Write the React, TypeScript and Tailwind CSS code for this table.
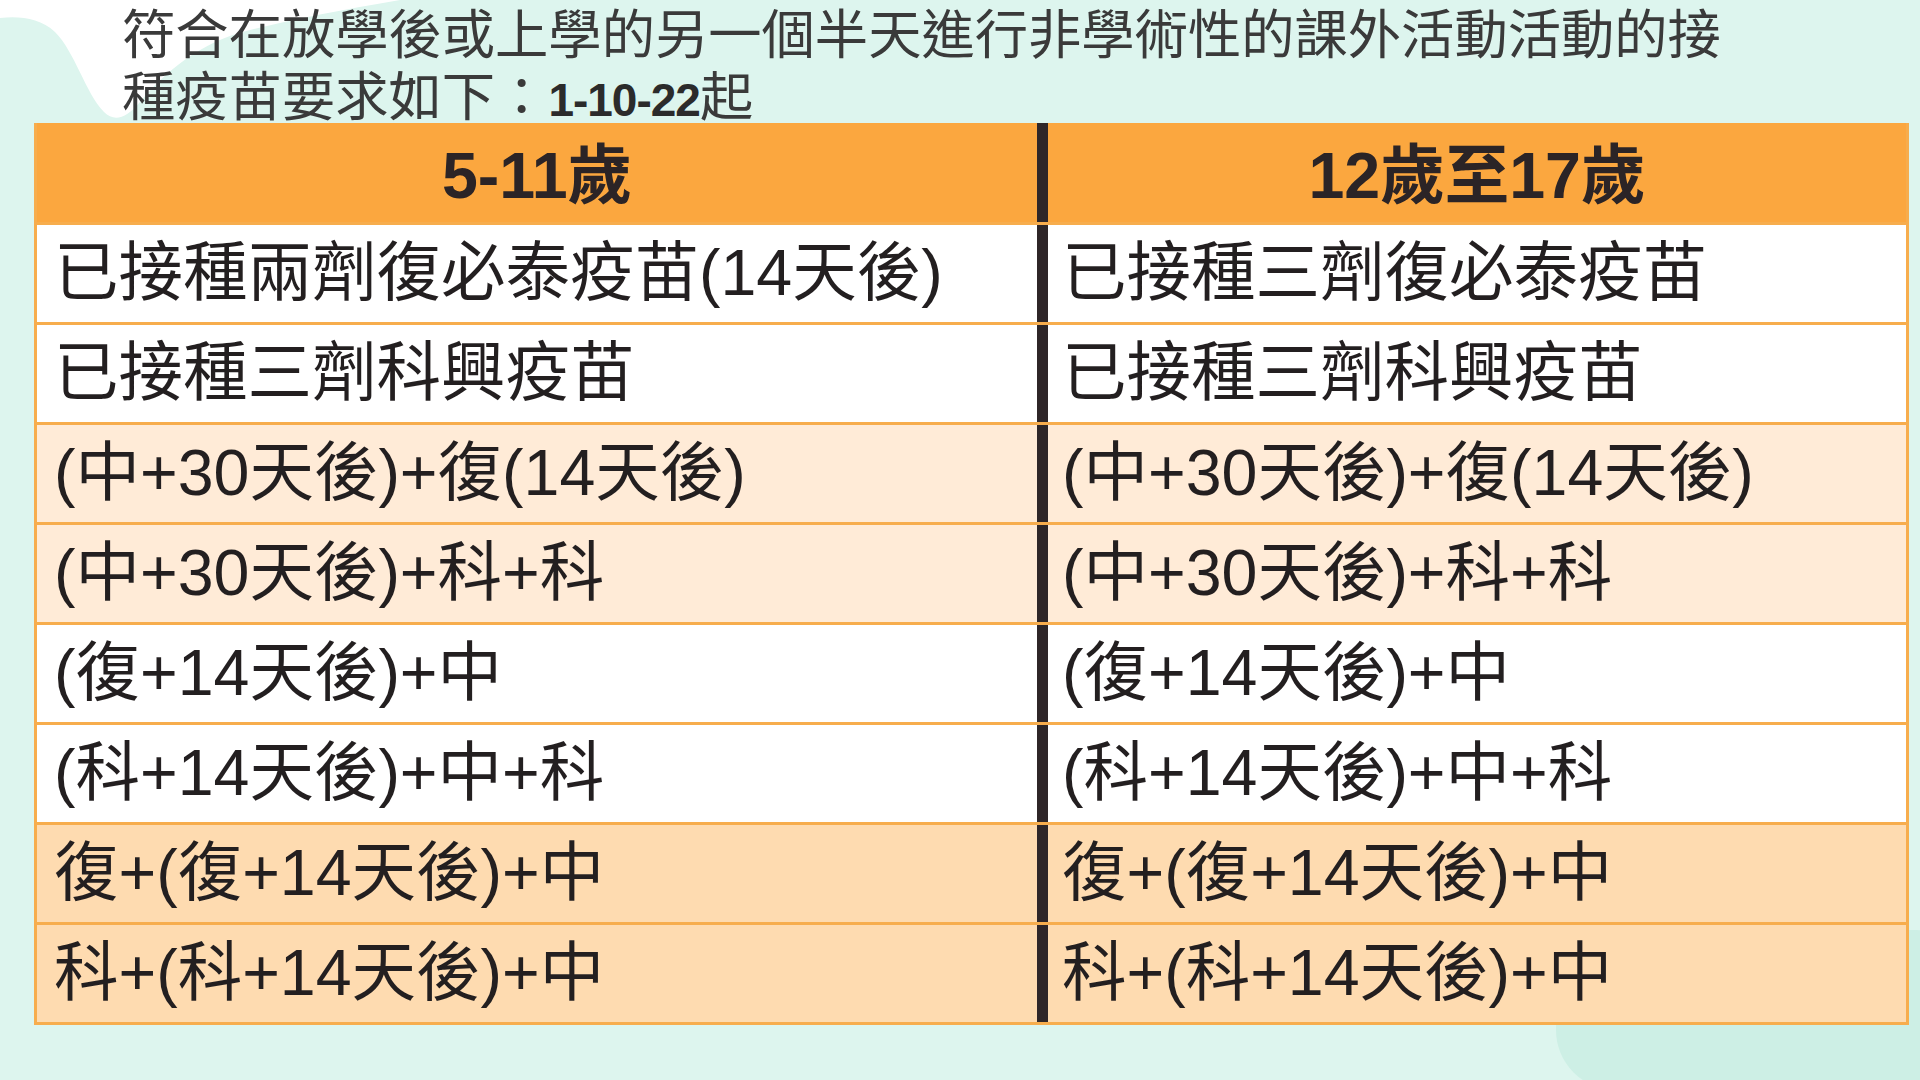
const rows = [
  { left: '已接種兩劑復必泰疫苗(14天後)', right: '已接種三劑復必泰疫苗', bg: 'bg-white' },
  { left: '已接種三劑科興疫苗', right: '已接種三劑科興疫苗', bg: 'bg-white' },
  { left: '(中+30天後)+復(14天後)', right: '(中+30天後)+復(14天後)', bg: 'bg-[#ffebd7]' },
  { left: '(中+30天後)+科+科', right: '(中+30天後)+科+科', bg: 'bg-[#ffebd7]' },
  { left: '(復+14天後)+中', right: '(復+14天後)+中', bg: 'bg-white' },
  { left: '(科+14天後)+中+科', right: '(科+14天後)+中+科', bg: 'bg-white' },
  { left: '復+(復+14天後)+中', right: '復+(復+14天後)+中', bg: 'bg-[#fedbb0]' },
  { left: '科+(科+14天後)+中', right: '科+(科+14天後)+中', bg: 'bg-[#fedbb0]' },
];

export default function App() {
  return (
    <div className="relative h-[1080px] w-full overflow-hidden bg-[#ddf5ee] font-['Liberation_Sans','Noto_Sans_CJK_TC',sans-serif]">
      {/* Decorative blobs */}
      <svg className="absolute left-0 top-0" width="420" height="140" viewBox="0 0 420 140">
        <path
          d="M0,0 L0,18 C20,16 40,18 55,32 C75,52 85,92 104,112 C114,122 126,119 140,102 C165,72 200,42 250,30 C290,20 340,10 400,0 Z"
          fill="#ffffff"
        />
      </svg>
      <div className="absolute left-[1556px] top-[930px] h-[160px] w-[420px] rounded-[60px] bg-[#cdefe5]" />

      <div className="relative">
        {/* Title */}
        <div className="h-[123px] overflow-hidden whitespace-nowrap pl-[122px] pt-[5px] text-[53.3px] leading-[62px] text-[#3a3a3a]">
          符合在放學後或上學的另一個半天進行非學術性的課外活動活動的接
          <br />
          種疫苗要求如下：<span className="text-[46px] font-bold tracking-[-1px] text-[#2b2b2b]">1-10-22</span>起
        </div>

        {/* Table */}
        <div className="ml-[34px] w-[1875px] border-x-[3px] border-b-[3px] border-[#f7ad4d] text-[#231f20]">
          <div className="flex h-[99px] bg-[#fba73f] pt-[7px] text-[64.5px] font-bold text-[#2b2426]">
            <div className="flex w-[1000px] items-center justify-center">5-11歲</div>
            <div className="-mt-[7px] flex flex-1 items-center justify-center border-l-[11px] border-[#2e2628] pt-[7px]">12歲至17歲</div>
          </div>
          {rows.map((r, i) => (
            <div key={i} className={`flex h-[100px] border-t-[3px] border-[#f7ad4d] ${r.bg} text-[64.5px] leading-none`}>
              <div className="flex w-[1000px] items-center whitespace-nowrap pl-[17px]">{r.left}</div>
              <div className="flex flex-1 items-center whitespace-nowrap border-l-[11px] border-[#2e2628] pl-[14px]">{r.right}</div>
            </div>
          ))}
        </div>
      </div>
    </div>
  );
}
